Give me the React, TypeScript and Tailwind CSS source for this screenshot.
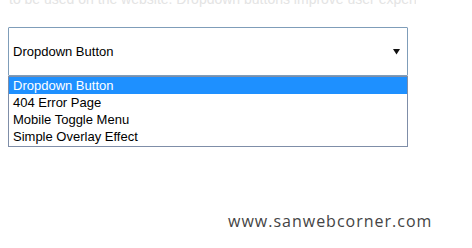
import React from 'react';

const options = ['Dropdown Button', '404 Error Page', 'Mobile Toggle Menu', 'Simple Overlay Effect'];

export default function App() {
    return (
        <div className="w-[472px] h-[248px] bg-white overflow-hidden relative">
            {/* faint text cut at top edge */}
            <div className="-mt-[10px] pl-[9px] w-[416px] overflow-hidden text-[14px] leading-[18px] text-[#e4e4e4] whitespace-nowrap" style={{ fontFamily: '"Liberation Sans", Arial, sans-serif' }}>
                to be used on the website. Dropdown buttons improve user experience
            </div>

            <div className="mt-[19px] ml-[8px] w-[400px]" style={{ fontFamily: '"Liberation Sans", Arial, sans-serif' }}>
                {/* closed select */}
                <div className="h-[49px] border border-[#7f9db9] rounded-[1px] bg-white flex items-center justify-between pl-[4px] pr-[6px] text-[13px] text-black">
                    <span>Dropdown Button</span>
                    <svg width="8" height="6" viewBox="0 0 8 6" className="mt-[1px]">
                        <path d="M0 0 H7 L3.5 5.5 Z" fill="#111" />
                    </svg>
                </div>

                {/* open list */}
                <div className="border border-[#7f8ea8] bg-white pb-[1px]">
                    {options.map((o, i) => (
                        <div
                            key={o}
                            className={`h-[17px] leading-[17px] pl-[4px] text-[13px] ${i === 0 ? 'bg-[#1e90ff] text-white' : 'text-black'}`}
                        >
                            {o}
                        </div>
                    ))}
                </div>
            </div>

            <div className="absolute left-[228px] top-[210px] text-[16px] leading-[22px] text-[#444] tracking-[1px]" style={{ fontFamily: '"Open Sans", Lato, sans-serif' }}>
                www.sanwebcorner.com
            </div>
        </div>
    );
}
